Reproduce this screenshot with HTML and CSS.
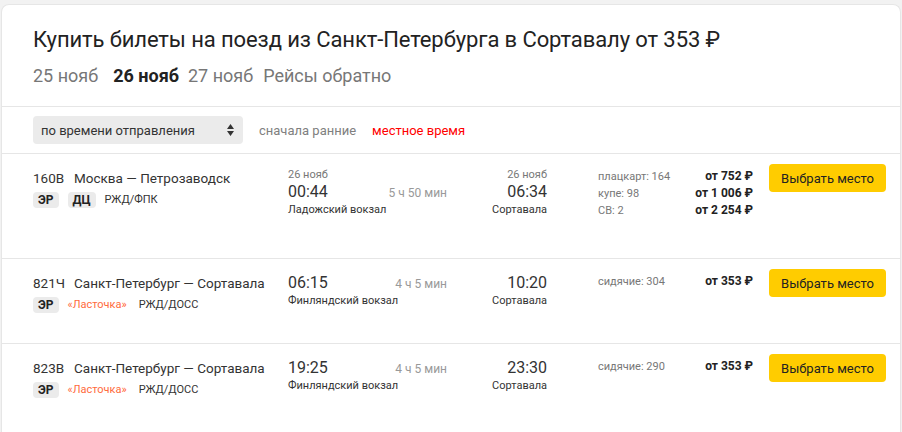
FILE: index.html
```html
<!DOCTYPE html>
<html lang="ru">
  <head>
    <meta http-equiv="Content-Type" content="text/html;charset=UTF-8" />
    <meta name="viewport" content="width=device-width, initial-scale=1.0" />
    <title>Поезда Санкт-Петербург — Сортавала</title>
    <link rel="stylesheet" href="styles.css">
  </head>
  <body>
    <div class="card">
      <header class="head">
        <h1 class="title">Купить билеты на поезд из Санкт-Петербурга в Сортавалу от 353 ₽</h1>
        <nav class="days">
          <a class="day">25 нояб</a>
          <b class="day day-current">26 нояб</b>
          <a class="day">27 нояб</a>
          <a class="day">Рейсы обратно</a>
        </nav>
      </header>

      <div class="sortbar">
        <div class="select">
          по времени отправления
          <svg class="select-arrows" width="7" height="12" viewBox="0 0 7 12">
            <path d="M3.5 0 L7 5 L0 5 Z M3.5 12 L7 7 L0 7 Z" fill="#333" />
          </svg>
        </div>
        <span class="sort-order">сначала ранние</span>
        <span class="local-time">местное время</span>
      </div>

      <ul class="trips">
        <li class="trip trip--tall">
          <div class="train">
            <div class="train-name"><span class="train-num">160В</span>Москва — Петрозаводск</div>
            <div class="train-tags">
              <span class="badge">ЭР</span>
              <span class="badge">ДЦ</span>
              <span>РЖД/ФПК</span>
            </div>
          </div>
          <div class="depart">
            <div class="date">26 нояб</div>
            <div class="time-line"><span class="time">00:44</span><span class="duration">5 ч 50 мин</span></div>
            <div class="station">Ладожский вокзал</div>
          </div>
          <div class="arrive">
            <div class="date">26 нояб</div>
            <div class="time">06:34</div>
            <div class="station">Сортавала</div>
          </div>
          <div class="classes">
            <div>плацкарт: 164</div>
            <div>купе: 98</div>
            <div>СВ: 2</div>
          </div>
          <div class="prices">
            <div>от 752 ₽</div>
            <div>от 1 006 ₽</div>
            <div>от 2 254 ₽</div>
          </div>
          <button class="pick">Выбрать место</button>
        </li>

        <li class="trip">
          <div class="train">
            <div class="train-name"><span class="train-num">821Ч</span>Санкт-Петербург — Сортавала</div>
            <div class="train-tags">
              <span class="badge">ЭР</span>
              <span class="brand">«Ласточка»</span>
              <span>РЖД/ДОСС</span>
            </div>
          </div>
          <div class="depart">
            <div class="time-line"><span class="time">06:15</span><span class="duration">4 ч 5 мин</span></div>
            <div class="station">Финляндский вокзал</div>
          </div>
          <div class="arrive">
            <div class="time">10:20</div>
            <div class="station">Сортавала</div>
          </div>
          <div class="classes">
            <div>сидячие: 304</div>
          </div>
          <div class="prices">
            <div>от 353 ₽</div>
          </div>
          <button class="pick">Выбрать место</button>
        </li>

        <li class="trip">
          <div class="train">
            <div class="train-name"><span class="train-num">823В</span>Санкт-Петербург — Сортавала</div>
            <div class="train-tags">
              <span class="badge">ЭР</span>
              <span class="brand">«Ласточка»</span>
              <span>РЖД/ДОСС</span>
            </div>
          </div>
          <div class="depart">
            <div class="time-line"><span class="time">19:25</span><span class="duration">4 ч 5 мин</span></div>
            <div class="station">Финляндский вокзал</div>
          </div>
          <div class="arrive">
            <div class="time">23:30</div>
            <div class="station">Сортавала</div>
          </div>
          <div class="classes">
            <div>сидячие: 290</div>
          </div>
          <div class="prices">
            <div>от 353 ₽</div>
          </div>
          <button class="pick">Выбрать место</button>
        </li>
      </ul>
    </div>
  </body>
</html>
```

FILE: styles.css
```css
body {
  margin: 0;
  background: #f2f2f2;
  font-family: Roboto, 'Noto Sans', sans-serif;
  color: #222;
}

.card {
  margin: 4px 1px 0;
  min-height: 440px;
  background: #fff;
  border: 1px solid #e6e6e6;
  border-bottom: none;
  border-radius: 8px 8px 0 0;
}

/* Header */
.head {
  padding: 21px 31px 18px;
  border-bottom: 1px solid #e6e6e6;
}

.title {
  margin: 0;
  font-size: 22px;
  line-height: 28px;
  font-weight: 400;
  letter-spacing: -0.1px;
  color: #222;
}

.days {
  display: flex;
  gap: 10px;
  margin-top: 10px;
  font-size: 18px;
  line-height: 24px;
  color: #777;
}

.day-current {
  margin-left: 5px;
  margin-right: -1px;
  font-weight: 700;
  color: #222;
}

/* Sort bar */
.sortbar {
  display: flex;
  align-items: center;
  gap: 16px;
  padding: 9px 31px;
  border-bottom: 1px solid #e6e6e6;
  font-size: 13px;
}

.select {
  display: flex;
  align-items: center;
  justify-content: space-between;
  box-sizing: border-box;
  width: 210px;
  height: 28px;
  padding: 0 9px 0 8px;
  background: #ebebeb;
  border-radius: 4px;
  color: #333;
}

.sort-order {
  color: #808080;
}

.local-time {
  color: #f00;
}

/* Trips */
.trips {
  margin: 0;
  padding: 0;
  list-style: none;
}

.trip {
  display: grid;
  grid-template-columns: 255px 159px 100px 1fr auto auto;
  align-items: start;
  box-sizing: border-box;
  min-height: 85px;
  padding: 14px 14px 0 31px;
  border-bottom: 1px solid #e6e6e6;
}

.trip:last-child {
  border-bottom: none;
}

.trip--tall {
  min-height: 105px;
}

.train-name {
  font-size: 13.5px;
  line-height: 20px;
  color: #333;
}

.train-num {
  display: inline-block;
  width: 41px;
}

.train-tags {
  display: flex;
  align-items: center;
  gap: 9px;
  margin-top: 4px;
  font-size: 11px;
  line-height: 14px;
  color: #333;
}

.badge {
  padding: 1px 5px;
  background: #ebebeb;
  border-radius: 4px;
  font-size: 12px;
  font-weight: 700;
  color: #222;
}

.train-tags .brand + span {
  margin-left: 3px;
}

.brand {
  color: #ff6a3d;
}

.date {
  font-size: 11px;
  line-height: 14px;
  color: #777;
}

.time-line {
  display: flex;
  justify-content: space-between;
  align-items: baseline;
}

.time {
  font-size: 16px;
  line-height: 20px;
  color: #333;
}

.duration {
  font-size: 12px;
  color: #999;
}

.station {
  font-size: 11px;
  line-height: 16px;
  color: #333;
}

.arrive {
  text-align: right;
}

.classes {
  padding-left: 51px;
  font-size: 11px;
  line-height: 17px;
  color: #777;
}

.prices {
  text-align: right;
  font-size: 12px;
  line-height: 17px;
  font-weight: 700;
  color: #222;
}

.pick {
  width: 117px;
  height: 28px;
  margin: -4px 0 0 16px;
  padding: 0;
  border: none;
  border-radius: 4px;
  background: #fc0;
  font-family: inherit;
  font-size: 13px;
  color: #222;
  cursor: pointer;
}
```
